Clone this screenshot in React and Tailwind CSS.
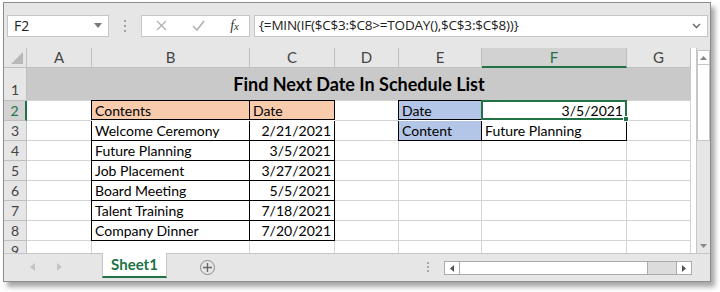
import React from "react";

const cols = ["A", "B", "C", "D", "E", "F", "G"];
const rows = [
  ["Welcome Ceremony", "2/21/2021"],
  ["Future Planning", "3/5/2021"],
  ["Job Placement", "3/27/2021"],
  ["Board Meeting", "5/5/2021"],
  ["Talent Training", "7/18/2021"],
  ["Company Dinner", "7/20/2021"],
];

const cell = "border-r border-b border-[#d4d4d4] h-[20px] leading-[19px] px-[3px] whitespace-nowrap overflow-hidden";
const rh = "border-r border-b border-[#bfbfbf] bg-[#e6e6e6] text-[#444] text-center h-[20px] leading-[20px] text-[14px]";

function FormulaBar() {
  return (
    <div className="h-[45px] bg-[#e6e6e6] flex items-center pl-[3px] pr-[2px] gap-0">
      <div className="w-[102px] h-[22px] bg-white border border-[#c6c6c6] flex items-center justify-between pl-[6px] pr-[6px] text-[14px] text-[#222] font-['Open_Sans',sans-serif]">
        <span>F2</span>
        <svg width="8" height="5" viewBox="0 0 8 5"><path d="M0 0h8L4 5z" fill="#7a7a7a" /></svg>
      </div>
      <div className="w-[32px] flex flex-col items-center gap-[3px]">
        <span className="w-[2px] h-[2px] bg-[#a0a0a0]" />
        <span className="w-[2px] h-[2px] bg-[#a0a0a0]" />
        <span className="w-[2px] h-[2px] bg-[#a0a0a0]" />
      </div>
      <div className="w-[109px] h-[22px] bg-white border border-[#c6c6c6] flex items-center justify-between pl-[14px] pr-[10px]">
        <svg width="11" height="11" viewBox="0 0 11 11"><path d="M1 1l9 9M10 1l-9 9" stroke="#b0b0b0" strokeWidth="1.3" /></svg>
        <svg width="13" height="11" viewBox="0 0 13 11"><path d="M1 6l4 4 7-9" stroke="#b0b0b0" strokeWidth="1.6" fill="none" /></svg>
        <span className="italic text-[14px] text-[#333] font-['Liberation_Serif',serif]">f<span className="text-[11px]">x</span></span>
      </div>
      <div className="ml-[4px] flex-1 h-[22px] bg-white border border-[#c6c6c6] flex items-center justify-between pl-[4px] pr-[6px] text-[13.5px] text-[#222] font-['Open_Sans',sans-serif] tracking-[-0.2px]">
        <span>{"{=MIN(IF($C$3:$C8>=TODAY(),$C$3:$C$8))}"}</span>
        <svg width="9" height="6" viewBox="0 0 9 6"><path d="M1 1l3.5 3.5L8 1" stroke="#666" strokeWidth="1.4" fill="none" /></svg>
      </div>
    </div>
  );
}

function Sheet() {
  return (
    <div className="grid grid-cols-[23px_65px_158px_85px_64px_83px_145px_64px] h-[205px] overflow-hidden content-start text-[14px] text-black">
      <div className="h-[20px] bg-[#e6e6e6] border-r border-b border-[#bfbfbf] flex items-end justify-end p-[3px]">
        <svg width="12" height="12" viewBox="0 0 12 12"><path d="M12 0v12H0z" fill="#b8b8b8" /></svg>
      </div>
      {cols.map((c) => (
        <div
          key={c}
          className={
            c === "F"
              ? "h-[20px] bg-[#d2d2d2] border-r border-b-2 border-r-[#bfbfbf] border-b-[#217346] text-center leading-[19px] text-[#217346] text-[15px]"
              : "h-[20px] bg-[#e6e6e6] border-r border-b border-[#bfbfbf] text-center leading-[19px] text-[#444] text-[15px]"
          }
        >
          {c}
        </div>
      ))}

      <div className="h-[33px] bg-[#e6e6e6] border-r border-b border-[#bfbfbf] text-[#444] text-center leading-[20px] pt-[12px] text-[14px]">1</div>
      <div className="col-span-7 h-[33px] bg-[#c9c9c9] border-b border-[#d4d4d4] flex items-center justify-center font-bold text-[18px] text-black">
        Find Next Date In Schedule List
      </div>

      <div className="h-[20px] bg-[#d2d2d2] border-r-2 border-b border-r-[#217346] border-b-[#bfbfbf] text-[#217346] text-center leading-[20px] text-[14px]">2</div>
      <div className={cell} />
      <div className="h-[20px] bg-[#f8cbad] border border-black -ml-px -mt-px leading-[19px] px-[3px]">Contents</div>
      <div className="h-[20px] bg-[#f8cbad] border border-black border-l-0 -mt-px leading-[19px] px-[3px]">Date</div>
      <div className={cell} />
      <div className="h-[20px] bg-[#b4c6e7] border border-black -ml-px -mt-px leading-[19px] px-[3px]">Date</div>
      <div className="relative h-[20px] border-2 border-[#217346] -mt-px -ml-px text-right leading-[17px] pr-[2px]">
        3/5/2021
        <span className="absolute -right-[4px] -bottom-[4px] w-[6px] h-[6px] bg-[#217346] border border-white" />
      </div>
      <div className={cell} />

      {rows.map(([name, date], i) => (
        <React.Fragment key={name}>
          <div className={rh}>{i + 3}</div>
          <div className={cell} />
          <div className="h-[20px] border-r border-b border-black border-l -ml-px leading-[19px] px-[3px] whitespace-nowrap">{name}</div>
          <div className="h-[20px] border-r border-b border-black leading-[19px] px-[3px] text-right">{date}</div>
          <div className={cell} />
          {i === 0 ? (
            <>
              <div className="h-[20px] bg-[#b4c6e7] border-l border-r border-b border-black -ml-px leading-[19px] px-[3px]">Content</div>
              <div className="h-[20px] border-r border-b border-black leading-[19px] px-[3px]">Future Planning</div>
            </>
          ) : (
            <>
              <div className={cell} />
              <div className={cell} />
            </>
          )}
          <div className={cell} />
        </React.Fragment>
      ))}

      <div className={rh}>9</div>
      {cols.map((c) => (
        <div key={c} className={cell} />
      ))}
    </div>
  );
}

function VScroll() {
  return (
    <div className="ml-[5px] w-[14px] h-[205px] bg-[#e6e6e6] border-l border-[#c6c6c6] flex flex-col items-stretch pt-[2px]">
      <div className="h-[15px] bg-white border border-[#c6c6c6] flex items-center justify-center">
        <svg width="7" height="4" viewBox="0 0 7 4"><path d="M0 4h7L3.5 0z" fill="#888" /></svg>
      </div>
      <div className="h-[76px] bg-white border border-t-0 border-[#c6c6c6]" />
      <div className="flex-1" />
      <div className="h-[14px] flex items-center justify-center">
        <svg width="7" height="4" viewBox="0 0 7 4"><path d="M0 0h7L3.5 4z" fill="#888" /></svg>
      </div>
    </div>
  );
}

function TabBar() {
  return (
    <div className="h-[28px] bg-[#e6e6e6] border-t border-[#c6c6c6] flex items-start">
      <div className="w-[98px] h-[26px] flex items-center pl-[26px] gap-[22px]">
        <svg width="5" height="8" viewBox="0 0 5 8"><path d="M5 0v8L0 4z" fill="#c4c4c4" /></svg>
        <svg width="5" height="8" viewBox="0 0 5 8"><path d="M0 0v8l5-4z" fill="#c4c4c4" /></svg>
      </div>
      <div className="-mt-px w-[65px] h-[25px] bg-white border-l border-r border-[#c6c6c6] border-b-2 border-b-[#217346] flex items-center justify-center font-bold text-[15px] text-[#217346]">
        Sheet1
      </div>
      <div className="ml-[33px] mt-[6px] w-[15px] h-[15px] rounded-full border border-[#8a8a8a] flex items-center justify-center">
        <svg width="9" height="9" viewBox="0 0 9 9"><path d="M4.5 0v9M0 4.5h9" stroke="#666" strokeWidth="1.3" /></svg>
      </div>
      <div className="ml-[212px] mt-[8px] flex flex-col gap-[2px]">
        <span className="w-[2px] h-[2px] bg-[#a8a8a8]" />
        <span className="w-[2px] h-[2px] bg-[#a8a8a8]" />
        <span className="w-[2px] h-[2px] bg-[#a8a8a8]" />
      </div>
      <div className="ml-[15px] mt-[7px] w-[248px] h-[14px] flex border border-[#ababab] bg-[#dcdcdc]">
        <div className="w-[15px] bg-white border-r border-[#ababab] flex items-center justify-center">
          <svg width="4" height="7" viewBox="0 0 4 7"><path d="M4 0v7L0 3.5z" fill="#555" /></svg>
        </div>
        <div className="w-[188px] bg-white border-r border-[#ababab]" />
        <div className="flex-1" />
        <div className="w-[15px] bg-white border-l border-[#ababab] flex items-center justify-center">
          <svg width="4" height="7" viewBox="0 0 4 7"><path d="M0 0v7l4-3.5z" fill="#555" /></svg>
        </div>
      </div>
    </div>
  );
}

export default function App() {
  return (
    <div className="w-[720px] h-[292px] bg-white pl-[3px] pt-[2px] font-['Lato',sans-serif]">
      <div className="w-[708px] border border-[#8c8c8c] bg-white shadow-[4px_5px_5px_rgba(0,0,0,0.35)]">
        <FormulaBar />
        <div className="flex">
          <Sheet />
          <VScroll />
        </div>
        <TabBar />
      </div>
    </div>
  );
}
